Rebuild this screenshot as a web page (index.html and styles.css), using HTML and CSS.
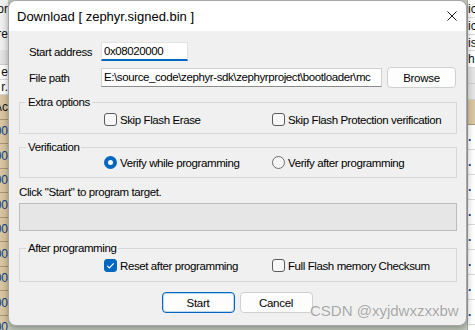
FILE: index.html
```html
<!DOCTYPE html>
<html>
<head>
<meta charset="utf-8">
<title>Download</title>
<link rel="stylesheet" href="styles.css">
</head>
<body>
<div class="desk">
  <div class="strip left">
    <div class="cell gray h17">or</div>
    <div class="cell gray h33">re</div>
    <div class="cell gray2 h15"></div>
    <div class="cell white h15">e</div>
    <div class="cell white h15">r.</div>
    <div class="cell tan">Ac</div>
    <div class="cell tan num">00</div>
    <div class="cell tan num">00</div>
    <div class="cell tan num">00</div>
    <div class="cell tan num">00</div>
    <div class="cell tan num">00</div>
    <div class="cell tan num">00</div>
    <div class="cell tan num">00</div>
    <div class="cell tan num">00</div>
    <div class="cell tan num">00</div>
  </div>
  <div class="mid"></div>
  <div class="strip right">
    <div class="cell white h18">ic</div>
    <div class="cell white h17">ic</div>
    <div class="cell white h16">isi</div>
    <div class="cell white h17">h</div>
    <div class="cell gray2 h16"></div>
    <div class="cell gray2 h16"></div>
    <div class="cell tan h25"></div>
    <div class="cell white h25 dot">.</div>
    <div class="cell white h25 dot">.</div>
    <div class="cell white h25 dot">.</div>
    <div class="cell white h25 dot">.</div>
    <div class="cell white h25 dot">.</div>
    <div class="cell white h25 dot">.</div>
    <div class="cell white h25 dot">.</div>
    <div class="cell white h25 dot">.</div>
    <div class="cell white h25 dot">.</div>
  </div>
</div>

<div class="dialog">
  <div class="titlebar">
    <span class="title">Download [ zephyr.signed.bin ]</span>
    <svg class="close" width="10" height="10" viewBox="0 0 10 10"><path d="M0.5 0.5L9.5 9.5M9.5 0.5L0.5 9.5" stroke="#1a1a1a" stroke-width="1" fill="none"/></svg>
  </div>
  <div class="body">
    <div class="row r1">
      <span class="lbl">Start address</span>
      <div class="input addr">0x08020000</div>
    </div>
    <div class="row r2">
      <span class="lbl">File path</span>
      <div class="input path">E:\source_code\zephyr-sdk\zephyrproject\bootloader\mc</div>
      <div class="btn browse">Browse</div>
    </div>

    <fieldset class="group g1">
      <legend>Extra options</legend>
      <div class="opts">
        <span class="opt"><span class="cb"></span>Skip Flash Erase</span>
        <span class="opt"><span class="cb"></span>Skip Flash Protection verification</span>
      </div>
    </fieldset>

    <fieldset class="group g2">
      <legend>Verification</legend>
      <div class="opts">
        <span class="opt"><span class="rb on"></span>Verify while programming</span>
        <span class="opt"><span class="rb"></span>Verify after programming</span>
      </div>
    </fieldset>

    <div class="hint">Click "Start" to program target.</div>
    <div class="progress"></div>

    <fieldset class="group g3">
      <legend>After programming</legend>
      <div class="opts">
        <span class="opt"><span class="cb on"><svg width="13" height="13" viewBox="0 0 13 13"><path d="M3.3 6.9L5.4 8.9L9.7 4.4" stroke="#fff" stroke-width="1.2" fill="none"/></svg></span>Reset after programming</span>
        <span class="opt"><span class="cb"></span>Full Flash memory Checksum</span>
      </div>
    </fieldset>

    <div class="actions">
      <div class="btn primary">Start</div>
      <div class="btn">Cancel</div>
    </div>
  </div>
</div>

<div class="watermark">CSDN @xyjdwxzxxbw</div>
</body>
</html>
```

FILE: styles.css
```css
* { box-sizing: border-box; }
html, body { margin: 0; padding: 0; }
body {
  width: 475px;
  height: 330px;
  overflow: hidden;
  position: relative;
  font-family: "Liberation Sans", Arial, sans-serif;
  background: #c6cec1;
}

/* background application */
.desk { display: flex; height: 330px; }
.strip {
  width: 8px;
  display: flex;
  flex-direction: column;
  overflow: hidden;
  font-size: 12px;
  color: #111;
}
.mid { flex: 1; background: #c3cbbd; }
.cell {
  display: flex;
  align-items: center;
  flex: none;
  overflow: hidden;
  white-space: nowrap;
}
.left .cell { justify-content: flex-end; }
.right { border-left: 1px solid #a8a8a8; }
.gray { background: #f0f0f0; }
.gray2 { background: #e4e4e4; border-bottom: 1px solid #cfcfcf; }
.white { background: #fff; border-bottom: 1px solid #dadada; }
.tan { background: #d9c6a2; border-bottom: 1px solid #a89878; height: 24.5px; }
.num { color: #0b3f8c; }
.h15 { height: 15px; }
.h16 { height: 16px; }
.h17 { height: 17px; }
.h18 { height: 18px; }
.h25 { height: 25px; }
.h33 { height: 33px; }
.dot { color: #0b3f8c; font-weight: bold; }

/* dialog */
.dialog {
  position: absolute;
  left: 8px;
  top: 0;
  width: 459px;
  height: 326px;
  background: #f0f0f0;
  border: 1px solid #a6a6a6;
  border-radius: 8px;
  box-shadow: 0 2px 7px rgba(0, 0, 0, 0.35);
  overflow: hidden;
  display: flex;
  flex-direction: column;
  font-size: 11.5px;
  letter-spacing: -0.4px;
  color: #000;
}
.titlebar {
  height: 30px;
  flex: none;
  background: #fff;
  display: flex;
  align-items: center;
  justify-content: space-between;
  padding: 0 9px 0 8px;
}
.title { font-size: 13px; letter-spacing: 0; color: #000; }
.close { display: block; }

.body {
  display: flex;
  flex-direction: column;
  padding: 11px 9px 0 10px;
}
.row { display: flex; align-items: center; }
.r1 { height: 19px; }
.r2 { height: 21px; margin-top: 6px; }
.lbl { width: 82px; padding-left: 10px; flex: none; }
.input {
  height: 19px;
  background: #fff;
  border: 1px solid #e2e2e2;
  padding: 0 2px;
  line-height: 17px;
  white-space: nowrap;
  overflow: hidden;
}
.addr { width: 87px; border-bottom: 2px solid #0067c0; line-height: 16px; }
.path { width: 281px; border-color: #d0d0d0; border-bottom-color: #8c8c8c; }
.btn {
  height: 21px;
  background: #fdfdfd;
  border: 1px solid #d0d0d0;
  border-radius: 4px;
  display: flex;
  align-items: center;
  justify-content: center;
  letter-spacing: -0.3px;
}
.browse { width: 69px; margin-left: 5px; }

.group {
  margin: 0;
  padding: 0 0 0 6px;
  border: 1px solid #d7d7d7;
  min-width: 0;
}
.group legend { padding: 0 2px; line-height: 14px; }
.g1 { margin-top: 7px; padding-bottom: 7px; }
.g2 { margin-top: 6px; padding-bottom: 8px; }
.g3 { margin-top: 10px; padding-bottom: 9px; }
.opts {
  display: grid;
  grid-template-columns: 168px auto;
  padding-left: 78px;
  height: 13px;
}
.g1 .opts { margin-top: 4px; }
.g2 .opts { margin-top: 2px; }
.g3 .opts { margin-top: 4px; }
.opt { display: flex; align-items: center; height: 13px; white-space: nowrap; }
.cb {
  width: 13px;
  height: 13px;
  flex: none;
  border: 1px solid #5c5c5c;
  border-radius: 3px;
  background: #f7f7f7;
  margin-right: 3px;
}
.cb.on {
  background: #0067c0;
  border-color: #0067c0;
  position: relative;
}
.cb.on svg { position: absolute; left: -1px; top: -1px; }
.rb {
  width: 13px;
  height: 13px;
  flex: none;
  border: 1px solid #6e6e6e;
  border-radius: 50%;
  background: #f5f5f5;
  margin-right: 3px;
}
.rb.on {
  background: #fff;
  border: 4px solid #0067c0;
}

.hint { margin-top: 7px; line-height: 14px; }
.progress {
  margin-top: 4px;
  height: 28px;
  background: #e6e6e6;
  border: 1px solid #bcbcbc;
}

.actions {
  display: flex;
  justify-content: center;
  gap: 5px;
  margin-top: 10px;
  padding-right: 2px;
}
.actions .btn { width: 73px; }
.btn.primary {
  border: 1px solid #0067c0;
  box-shadow: inset 0 0 0 1px rgba(0, 103, 192, 0.25);
}

.watermark {
  position: absolute;
  left: 310px;
  top: 302px;
  font-size: 15px;
  line-height: 17px;
  color: rgba(150, 150, 150, 0.85);
  text-shadow: 0 0 1px rgba(255, 255, 255, 0.9);
  white-space: nowrap;
}
```
